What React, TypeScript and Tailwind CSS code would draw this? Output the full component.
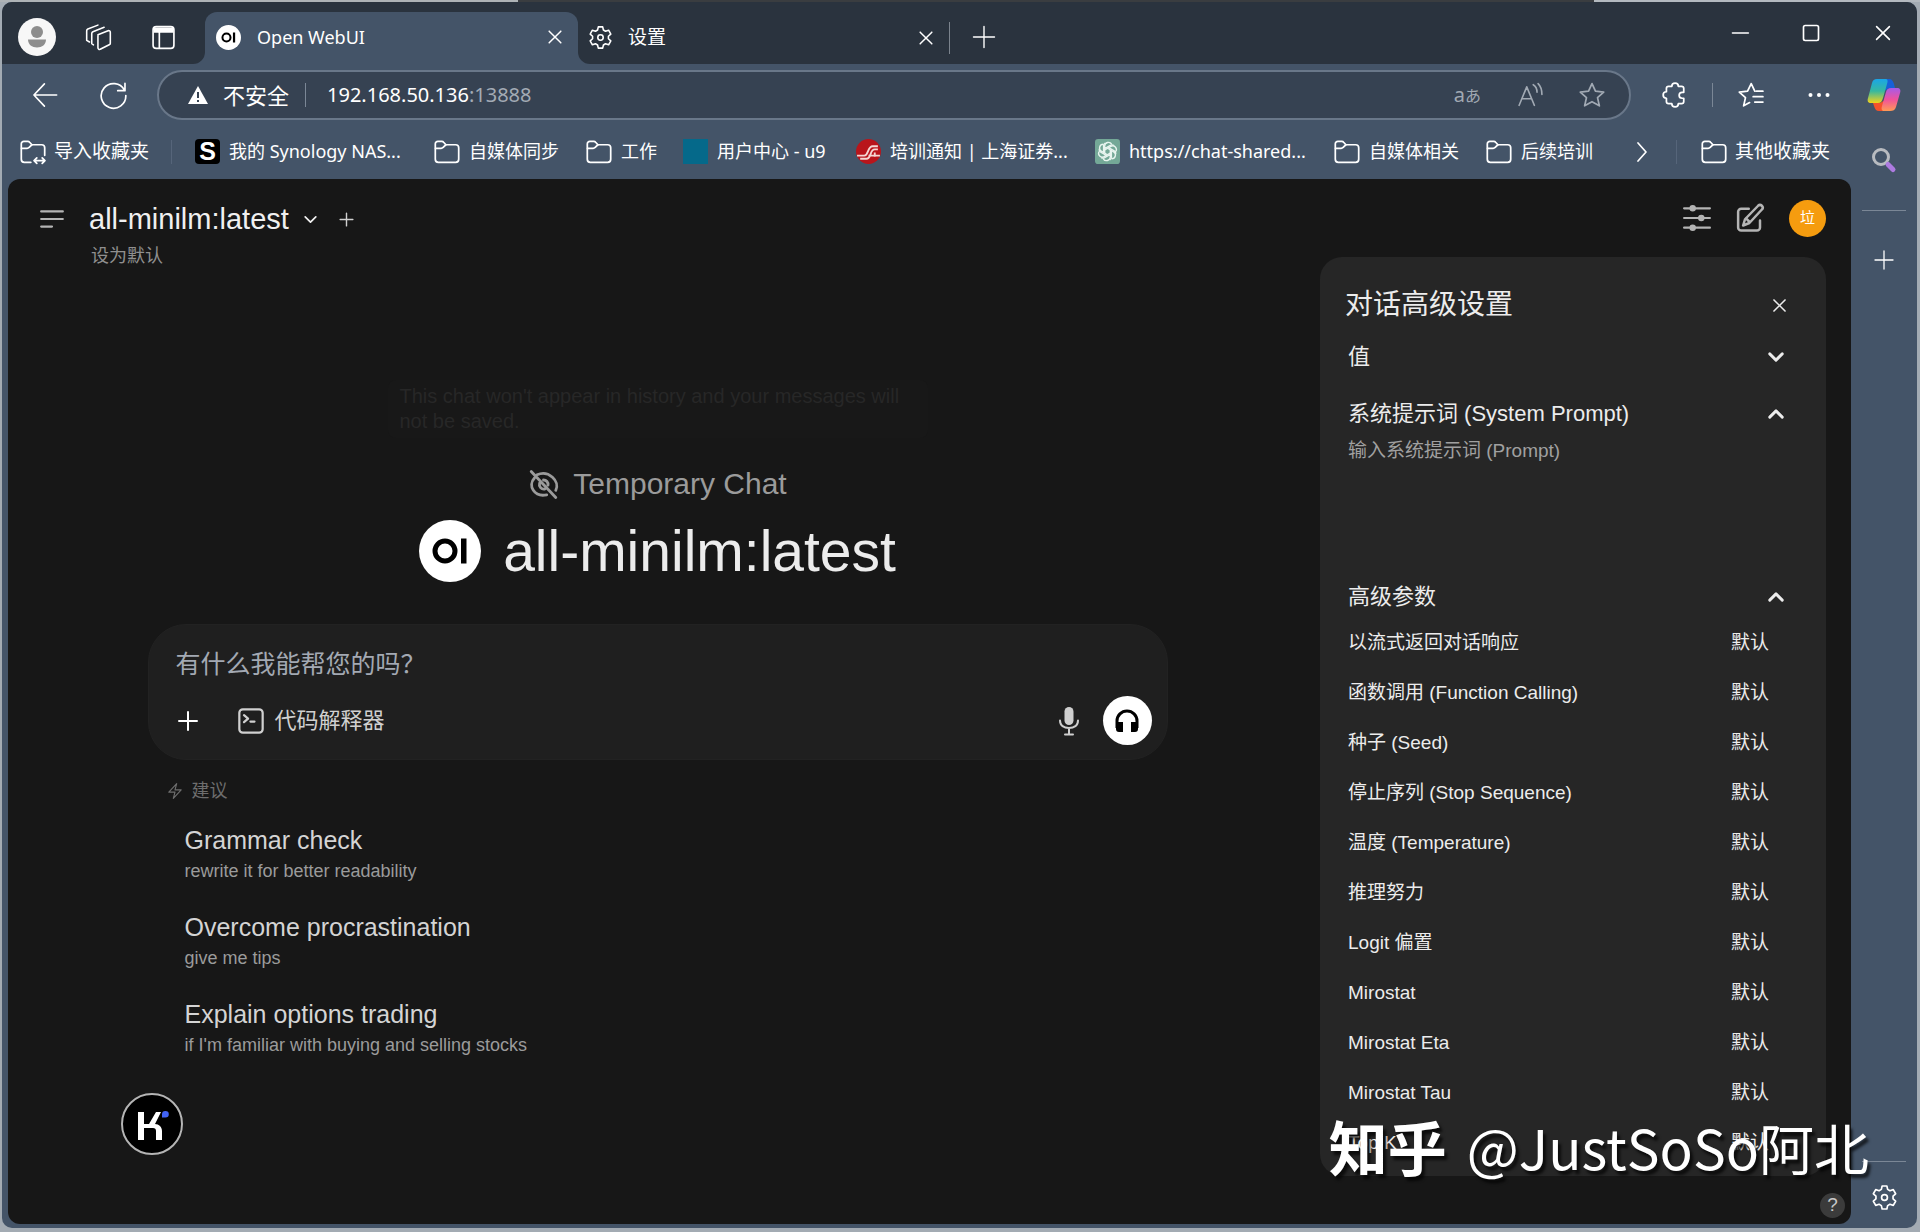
import { useState } from "react";
import type { ReactNode } from "react";
import { HiOutlineBolt } from "react-icons/hi2";

type IconProps = {
  className?: string;
  width?: number;
  children: ReactNode;
};

function Icon({ className = "size-6", width = 1.5, children }: IconProps) {
  return (
    <svg
      viewBox="0 0 24 24"
      fill="none"
      stroke="currentColor"
      strokeWidth={width}
      strokeLinecap="round"
      strokeLinejoin="round"
      className={`shrink-0 ${className}`}
      aria-hidden="true"
    >
      {children}
    </svg>
  );
}

function CloseIcon({ className = "size-6", width = 1.5 }: { className?: string; width?: number }) {
  return (
    <Icon className={className} width={width}>
      <path d="M5 5l14 14M19 5L5 19" />
    </Icon>
  );
}

function PlusIcon({ className = "size-6", width = 1.5 }: { className?: string; width?: number }) {
  return (
    <Icon className={className} width={width}>
      <path d="M12 3v18M3 12h18" />
    </Icon>
  );
}

function ChevronIcon({ className = "size-6", width = 2, up = false }: { className?: string; width?: number; up?: boolean }) {
  return (
    <Icon className={className} width={width}>
      <path d={up ? "M4.500 15.750l7.500-7.500 7.500 7.500" : "M19.500 8.250l-7.500 7.500-7.500-7.500"} />
    </Icon>
  );
}

function GearIcon({ className = "size-6" }: { className?: string }) {
  return (
    <Icon className={className} width={1.5}>
      <path d="M9.900 1.800h4.200l.7 3 2 1.200 3-1 2.100 3.700-2.300 2.100v2.400l2.300 2.100-2.100 3.700-3-1-2 1.200-.7 3H9.900l-.7-3-2-1.200-3 1-2.100-3.700 2.300-2.100v-2.400L2.100 8.700 4.200 5l3 1 2-1.200z" />
      <circle cx="12" cy="12" r="2.600" />
    </Icon>
  );
}

function FolderIcon({ sync = false }: { sync?: boolean }) {
  return (
    <Icon className="size-[26px]" width={1.6}>
      {sync ? (
        <>
          <path d="M10 21.500H4A2.800 2.800 0 0 1 1.200 18.700V4.500A2.300 2.300 0 0 1 3.500 2.200h3.700c.7 0 1.300.3 1.700.8L11 5.300h9a2.800 2.800 0 0 1 2.800 2.800v7" />
          <path d="M1.400 8.600h5.200c.7 0 1.200-.2 1.600-.7L11 5.300M13.500 20h9M15.500 17.500L13 20l2.500 2.500M20.500 17.500L23 20l-2.500 2.500" />
        </>
      ) : (
        <>
          <path d="M1.200 18.700V4.500A2.300 2.300 0 0 1 3.500 2.200h3.700c.7 0 1.300.3 1.700.8L11 5.300h9a2.800 2.800 0 0 1 2.800 2.800v10.600a2.800 2.800 0 0 1-2.800 2.800H4a2.800 2.800 0 0 1-2.800-2.800z" />
          <path d="M1.400 8.600h5.200c.7 0 1.200-.2 1.600-.7L11 5.300" />
        </>
      )}
    </Icon>
  );
}

function OiLogo({ className }: { className: string }) {
  return (
    <svg viewBox="0 0 62 62" className={`shrink-0 ${className}`} aria-hidden="true">
      <circle cx="31" cy="31" r="31" fill="#fff" />
      <circle cx="26" cy="31" r="10" fill="none" stroke="#000" strokeWidth="5" />
      <path d="M42 18.500h5.500v25H42z" fill="#000" />
    </svg>
  );
}

function SynologyIcon() {
  return (
    <span className="flex size-[25px] shrink-0 items-center justify-center rounded-sm bg-black font-['Liberation_Sans',sans-serif] text-[25px] leading-none font-bold text-white">
      S
    </span>
  );
}

function ExchangeIcon() {
  return (
    <svg viewBox="0 0 24 24" className="size-[25px] shrink-0" aria-hidden="true">
      <circle cx="12" cy="12" r="12" fill="#b9151b" />
      <path d="M1 16h7c4 0 3-9 8-9h5M4 19h6c5 0 3-9 8-9h3M12 16h11M18 13v4" fill="none" stroke="#f5d7d3" strokeWidth="1.800" />
    </svg>
  );
}

function GptIcon() {
  return (
    <svg viewBox="0 0 24 24" className="size-[25px] shrink-0" aria-hidden="true">
      <rect width="24" height="24" rx="3" fill="#74a897" />
      <g fill="none" stroke="#e8f4ef" strokeWidth="1.300">
        {[0, 60, 120, 180, 240, 300].map((angle) => (
          <path key={angle} transform={`rotate(${angle} 12 12)`} d="M9.300 13.500V6.700a3.600 3.600 0 0 1 6.700-1.700M9.300 9.200l5.400-3.100a3.600 3.600 0 0 1 3.300 0" />
        ))}
      </g>
    </svg>
  );
}

function CopilotIcon() {
  return (
    <svg viewBox="0 0 34 34" className="size-[34px]" aria-hidden="true">
      <defs>
        <linearGradient id="coolSide" x1="0" y1="0" x2="0" y2="1">
          <stop offset="0" stopColor="#1aa5e8" />
          <stop offset=".5" stopColor="#36b8a0" />
          <stop offset="1" stopColor="#f2d21b" />
        </linearGradient>
        <linearGradient id="warmSide" x1="0" y1="0" x2="0" y2="1">
          <stop offset="0" stopColor="#a65be8" />
          <stop offset=".5" stopColor="#f0529c" />
          <stop offset="1" stopColor="#ff9a55" />
        </linearGradient>
      </defs>
      <path d="M11 1h11c3 0 4 2 5 5l1 4h-6l-6 4z" fill="#1760d8" />
      <path d="M22 33H12c-3 0-4-2-5-5l-1-3h7l7-4z" fill="#f4522b" />
      <path d="M10 1h8c3 0 3 2 2 5l-4 14c-1 3-2 5-5 5H4c-3 0-4-2-3-5L5 5c1-3 2-4 5-4z" fill="url(#coolSide)" />
      <path d="M24 10h6c3 0 4 2 3 5l-4 14c-1 3-3 4-6 4h-6c-2 0-3-2-2-5l4-14c1-3 2-4 5-4z" fill="url(#warmSide)" />
    </svg>
  );
}

const bookmarks: { label: string; icon: ReactNode; width: string }[] = [
  { label: "我的 Synology NAS...", icon: <SynologyIcon />, width: "w-[215px]" },
  { label: "自媒体同步", icon: <FolderIcon />, width: "w-[128px]" },
  { label: "工作", icon: <FolderIcon />, width: "w-[73px]" },
  { label: "用户中心 - u9", icon: <span className="size-[25px] shrink-0 bg-[#05698a]" />, width: "w-[149px]" },
  { label: "培训通知 | 上海证券...", icon: <ExchangeIcon />, width: "w-[215px]" },
  { label: "https://chat-shared...", icon: <GptIcon />, width: "w-[215px]" },
  { label: "自媒体相关", icon: <FolderIcon />, width: "w-[128px]" },
  { label: "后续培训", icon: <FolderIcon />, width: "w-[111px]" },
];

const suggestions = [
  { title: "Grammar check", text: "rewrite it for better readability" },
  { title: "Overcome procrastination", text: "give me tips" },
  { title: "Explain options trading", text: "if I'm familiar with buying and selling stocks" },
];

const params = [
  "以流式返回对话响应",
  "函数调用 (Function Calling)",
  "种子 (Seed)",
  "停止序列 (Stop Sequence)",
  "温度 (Temperature)",
  "推理努力",
  "Logit 偏置",
  "Mirostat",
  "Mirostat Eta",
  "Mirostat Tau",
  "Top K",
];

function TitleBar() {
  return (
    <div className="flex h-[62px] shrink-0 items-stretch bg-[#2a333e] text-[18px]">
      <div className="flex w-[203px] shrink-0 items-center pt-2 pl-4">
        <button aria-label="个人资料">
          <svg viewBox="0 0 38 38" className="size-[38px]">
            <circle cx="19" cy="19" r="19" fill="#f7f7f7" />
            <circle cx="19" cy="14" r="6" fill="#8d8d8d" />
            <path d="M10 21.500h18c0 5-4 8-9 8s-9-3-9-8z" fill="#8d8d8d" />
          </svg>
        </button>
        <button aria-label="工作区" className="ml-[29px]">
          <Icon className="size-[27px]" width={1.4}>
            <path d="M11.500 9.500l9-3.500a1.500 1.500 0 0 1 2 1.500v9.500c0 .7-.4 1.200-1 1.500l-8 4a1.500 1.500 0 0 1-2-1.500V11c0-.7.300-1.200 0-1.500z" />
            <path d="M7.500 18.500L6 17.500V8.500c0-.8.400-1.300 1-1.600l10-4M4 16l-2.500-1.500V6c0-.8.400-1.300 1-1.600l9-3.400" />
          </Icon>
        </button>
        <button aria-label="标签页操作菜单" className="ml-[39px]">
          <Icon className="size-[25px]" width={1.6}>
            <rect x="2" y="1.500" width="20" height="21" rx="3" />
            <path d="M2.500 5h19" strokeWidth="5" strokeLinecap="butt" />
            <path d="M8 7v15" />
          </Icon>
        </button>
      </div>
      <div className="relative mt-[10px] flex w-[373px] shrink-0 items-center rounded-t-xl bg-[#445468] pb-[2px] pl-[11px]">
        <svg viewBox="0 0 12 12" className="absolute bottom-0 -left-3 size-3 fill-[#445468]" aria-hidden="true">
          <path d="M12 0v12H0A12 12 0 0 0 12 0z" />
        </svg>
        <svg viewBox="0 0 12 12" className="absolute -right-3 bottom-0 size-3 fill-[#445468]" aria-hidden="true">
          <path d="M0 0v12h12A12 12 0 0 1 0 0z" />
        </svg>
        <OiLogo className="size-[25px]" />
        <span className="ml-4 flex-1 text-white">Open WebUI</span>
        <button aria-label="关闭标签页" className="mr-[13px]">
          <CloseIcon className="size-5" width={1.8} />
        </button>
      </div>
      <div className="flex w-[372px] shrink-0 items-center pt-[9px] pl-[10px]">
        <GearIcon className="size-[25px]" />
        <span className="ml-[15px] flex-1 text-[19px]">设置</span>
        <button aria-label="关闭标签页" className="mr-[13px]">
          <CloseIcon className="size-5" width={1.8} />
        </button>
        <span className="h-8 w-px bg-[#7b838d]" />
      </div>
      <button aria-label="新建标签页" className="mt-2 ml-[20px]">
        <PlusIcon className="size-7" width={1.2} />
      </button>
      <div className="flex flex-1 items-center justify-end gap-[51px] pr-[23px]">
        <button aria-label="最小化">
          <Icon className="size-5" width={2}>
            <path d="M3 12h19" />
          </Icon>
        </button>
        <button aria-label="最大化">
          <Icon className="size-5" width={2}>
            <rect x="3" y="3" width="18" height="18" rx="2" />
          </Icon>
        </button>
        <button aria-label="关闭">
          <CloseIcon className="size-[22px]" width={1.7} />
        </button>
      </div>
    </div>
  );
}

function Toolbar() {
  return (
    <div className="flex h-[62px] shrink-0 items-center pl-[29px]">
      <button aria-label="返回">
        <Icon className="size-[28px]" width={1.4}>
          <path d="M22 12H2.500M11.500 2.500L2.500 12l9 9.500" />
        </Icon>
      </button>
      <button aria-label="刷新" className="ml-[40px]">
        <Icon className="size-[29px]" width={1.4}>
          <path d="M21.500 2v6h-6M21 7.500A10.200 10.200 0 1 0 22.200 12" />
        </Icon>
      </button>
      <div className="ml-[29px] flex h-[50px] flex-1 items-center rounded-full border-2 border-[#697789] bg-[#364252] pr-[24px] pl-[29px]">
        <svg viewBox="0 0 20 18" className="h-[18px] w-5" aria-hidden="true">
          <path d="M10 0l10 18H0z" fill="#fff" />
          <path d="M10 6v6M10 14v2" stroke="#364252" strokeWidth="2" />
        </svg>
        <span className="ml-[15px] text-[22px]">不安全</span>
        <span className="mx-[16px] h-6 w-px bg-[#7b8796]" />
        <div className="relative ml-[5px] flex-1 text-[20px]">
          <div className="pointer-events-none" aria-hidden="true">
            192.168.50.136<span className="text-[#a3abb5]">:13888</span>
          </div>
          <input aria-label="地址" defaultValue="192.168.50.136:13888" className="absolute inset-0 w-full bg-transparent text-transparent outline-none" />
        </div>
        <div className="flex items-center gap-[36px] text-[#a1a9b3]">
          <button aria-label="翻译" className="text-[20px]">
            a<span className="text-[16px]">あ</span>
          </button>
          <button aria-label="大声朗读">
            <Icon className="size-[26px]" width={1.5}>
              <path d="M2 21.500L9 4.500l7 17M4.500 15.500h9M15 2.500c2.500 1.500 3.500 4 3.500 7M19.500 1.500c2.500 2.500 3.500 6 3.500 10" />
            </Icon>
          </button>
          <button aria-label="收藏">
            <Icon className="size-[26px]" width={1.6}>
              <path d="M12 1.500l3.200 7 7.600.8-5.700 5.100 1.700 7.600L12 18.200 5.200 22l1.700-7.600L1.200 9.300l7.600-.8z" />
            </Icon>
          </button>
        </div>
      </div>
      <div className="flex items-center pr-[16px] pl-[30px]">
        <button aria-label="扩展">
          <Icon className="size-[26px]" width={1.6}>
            <path d="M5 6a2 2 0 0 1 2-2h3a3 3 0 0 1 6 0h3a2 2 0 0 1 2 2v3.500h-1.500a2.700 2.700 0 0 0 0 5.500H21v3a2 2 0 0 1-2 2h-3a3 3 0 0 1-6 0H7a2 2 0 0 1-2-2v-3a3 3 0 0 1 0-6z" />
          </Icon>
        </button>
        <span className="ml-[25px] h-6 w-px bg-[#7b8796]" />
        <button aria-label="收藏夹" className="ml-[25px]">
          <Icon className="size-[26px]" width={1.6}>
            <path d="M15.500 8.500L12.200 1.500l-3.400 7-7.600.8 5.700 5.100L5.200 22l5.500-3M17 8.500h6M14 13.500h9M15.500 18.500H23" />
          </Icon>
        </button>
        <button aria-label="设置及其他" className="ml-[43px]">
          <svg viewBox="0 0 24 24" className="size-6 fill-current">
            <circle cx="3.500" cy="12" r="2" />
            <circle cx="12" cy="12" r="2" />
            <circle cx="20.500" cy="12" r="2" />
          </svg>
        </button>
        <button aria-label="Copilot" className="ml-[36px]">
          <CopilotIcon />
        </button>
      </div>
    </div>
  );
}

function BookmarksBar() {
  return (
    <nav className="flex h-[53px] shrink-0 items-center pr-[21px] pb-[2px] pl-[18px] text-[18px] whitespace-nowrap">
      <a href="#import" className="flex w-[151px] shrink-0 items-center gap-[8px] text-[19px]">
        <FolderIcon sync />
        导入收藏夹
      </a>
      <span className="mr-[23px] h-6 w-px bg-[#56657a]" />
      <div className="flex gap-[24px]">
        {bookmarks.map((item) => (
          <a key={item.label} href="#bookmark" className={`flex shrink-0 items-center gap-[9px] ${item.width}`}>
            {item.icon}
            <span>{item.label}</span>
          </a>
        ))}
      </div>
      <div className="flex flex-1 items-center justify-end">
        <button aria-label="更多收藏夹">
          <Icon className="size-6" width={1.7}>
            <path d="M8 3l8 9-8 9" />
          </Icon>
        </button>
        <span className="mr-[24px] ml-[22px] h-6 w-px bg-[#56657a]" />
        <a href="#others" className="flex items-center gap-[8px] text-[19px]">
          <FolderIcon />
          其他收藏夹
        </a>
      </div>
    </nav>
  );
}

function EdgeSidebar() {
  return (
    <aside className="flex w-[66px] shrink-0 flex-col items-center pt-[20px] pb-[17px]">
      <button aria-label="搜索">
        <svg viewBox="0 0 28 28" className="size-7" fill="none">
          <circle cx="11" cy="11" r="7.500" stroke="#b8bbc0" strokeWidth="3" />
          <path d="M18 18.500l5 5" stroke="#ad7be0" strokeWidth="5" strokeLinecap="round" />
        </svg>
      </button>
      <span className="mt-[36px] h-px w-11 bg-[#7b8796]" />
      <button aria-label="自定义边栏" className="mt-[37px]">
        <PlusIcon className="size-6" width={1.3} />
      </button>
      <span className="mt-auto mb-[22px] h-px w-11 bg-[#7b8796]" />
      <button aria-label="设置">
        <GearIcon className="size-[27px]" />
      </button>
    </aside>
  );
}

function Composer() {
  const [message, setMessage] = useState("");

  return (
    <form className="mt-[42px] rounded-[38px] border border-[#222222] bg-[#1f1f1f] px-[15px] pt-[19px] pb-[14px]" onSubmit={(e) => e.preventDefault()}>
      <input
        aria-label="消息"
        value={message}
        onChange={(e) => setMessage(e.target.value)}
        placeholder="有什么我能帮您的吗？"
        className="h-10 w-full bg-transparent px-[12px] text-[25px] text-gray-100 outline-none placeholder:text-[#a3a9b3]"
      />
      <div className="mt-3 flex h-[49px] items-center">
        <button type="button" aria-label="更多" className="ml-[12px] text-white">
          <PlusIcon className="size-6" width={2} />
        </button>
        <button type="button" className="ml-[37px] flex items-center gap-[10px] text-[22px] text-[#d0d0d0]">
          <Icon className="size-[28px]" width={1.9}>
            <rect x="2" y="2" width="20" height="20" rx="3" />
            <path d="M6 7l3.500 3L6 13M11.500 12.500h3.500" />
          </Icon>
          代码解释器
        </button>
        <button type="button" aria-label="语音输入" className="ml-auto text-[#cfcfcf]">
          <svg viewBox="0 0 24 30" className="h-[30px] w-6">
            <rect x="7.500" y="1" width="9" height="18" rx="4.500" fill="currentColor" />
            <path d="M3 14.500c0 5 4 7.500 9 7.500s9-2.500 9-7.500M12 22v6M8 28.500h8" fill="none" stroke="currentColor" strokeWidth="2" strokeLinecap="round" />
          </svg>
        </button>
        <button type="button" aria-label="语音通话" className="ml-[22px] flex size-[49px] items-center justify-center rounded-full bg-white text-black">
          <svg viewBox="0 0 24 24" className="size-6">
            <path d="M2 19v-7a10 10 0 0 1 20 0v7" fill="none" stroke="currentColor" strokeWidth="3" />
            <path d="M1 13h7v10H4a3 3 0 0 1-3-3zM23 13h-7v10h4a3 3 0 0 0 3-3z" fill="currentColor" />
          </svg>
        </button>
      </div>
    </form>
  );
}

function ChatColumn() {
  return (
    <main className="flex min-w-0 flex-1 flex-col">
      <header className="pt-[22px] pl-[31px]">
        <div className="flex items-center">
          <button aria-label="侧边栏" className="text-[#b4b4b4]">
            <Icon className="size-[26px]" width={2}>
              <path d="M2 5h20M2 12h20M2 19h10" />
            </Icon>
          </button>
          <button className="ml-[24px] flex items-center gap-[13px] text-[29px] leading-[36px] text-[#f0f0f0]">
            all-minilm:latest
            <ChevronIcon className="size-[17px]" width={2.4} />
          </button>
          <button aria-label="添加模型" className="ml-[19px] text-[#d0d0d0]">
            <PlusIcon className="size-[17px]" width={2} />
          </button>
        </div>
        <button className="mt-[6px] ml-[52px] block text-[18px] leading-[26px] text-[#8f8f8f]">设为默认</button>
      </header>

      <div className="mx-auto mt-[111px] w-full max-w-[1020px]">
        <p className="mx-auto w-[540px] rounded-lg bg-[#181818] px-3 py-1 text-[20px] leading-[25px] text-[#272727]">
          This chat won't appear in history and your messages will not be saved.
        </p>
        <div className="mt-[26px] flex items-center justify-center gap-[14px] text-[30px] leading-[40px] text-[#9b9b9b]">
          <Icon className="size-[31px]" width={2.2}>
            <path d="M2.500 2l19 20M7 4.500c9-4 18 5 14.500 12M5 7C-.500 13 5 22 14.500 20M12 8.500a3.500 3.500 0 0 1 3.500 4M9 11a3.500 3.500 0 0 0 4 4.500" />
          </Icon>
          Temporary Chat
        </div>
        <div className="mt-4 flex items-center justify-center gap-[22px]">
          <OiLogo className="size-[62px]" />
          <h1 className="text-[57px] leading-[62px] text-[#ececec]">all-minilm:latest</h1>
        </div>

        <Composer />

        <div className="mt-[18px] flex items-center gap-[8px] pl-[18px] text-[18px] leading-[26px] text-[#6e6e6e]">
          <HiOutlineBolt className="size-[18px]" />
          建议
        </div>
        <div className="mt-[20px] flex flex-col gap-[28px] pl-[37px]">
          {suggestions.map((item) => (
            <button key={item.title} className="block text-left">
              <span className="block text-[25px] leading-[32px] text-[#d4d4d4]">{item.title}</span>
              <span className="mt-[3px] block text-[18px] leading-[24px] text-[#9b9b9b]">{item.text}</span>
            </button>
          ))}
        </div>
      </div>
    </main>
  );
}

function SettingsPanel() {
  return (
    <section className="w-[506px] overflow-hidden rounded-[22px] bg-[#262626] pr-[37px] pb-[8px] pl-[28px] text-[#ececec]">
      <div className="flex items-center justify-between pt-[28px]">
        <h2 className="-ml-[3px] text-[28px] leading-[40px]">对话高级设置</h2>
        <button aria-label="关闭">
          <CloseIcon className="size-[19px]" width={2} />
        </button>
      </div>
      <button className="mt-[16px] flex w-full items-center justify-between text-[22px] leading-[32px]">
        值
        <ChevronIcon className="mr-[3px] size-5" width={3.4} />
      </button>
      <button className="mt-[25px] flex w-full items-center justify-between text-[22px] leading-[32px]">
        系统提示词 (System Prompt)
        <ChevronIcon className="mr-[3px] size-5" width={3.4} up />
      </button>
      <textarea
        aria-label="系统提示词"
        placeholder="输入系统提示词 (Prompt)"
        className="mt-[8px] block h-[112px] w-full resize-none bg-transparent text-[19px] leading-[26px] outline-none placeholder:text-[#a0a0a0]"
      />
      <button className="mt-[31px] flex w-full items-center justify-between text-[22px] leading-[32px]">
        高级参数
        <ChevronIcon className="mr-[3px] size-5" width={3.4} up />
      </button>
      <div className="mt-[5px] text-[19px]">
        {params.map((name) => (
          <div key={name} className="flex h-[50px] items-center justify-between pr-[20px]">
            <span>{name}</span>
            <button>默认</button>
          </div>
        ))}
      </div>
    </section>
  );
}

function SettingsColumn() {
  return (
    <div className="flex w-[544px] shrink-0 flex-col items-end pr-[25px]">
      <div className="flex h-[78px] shrink-0 items-center gap-[24px] text-[#b4b4b4]">
        <button aria-label="对话高级设置">
          <svg viewBox="0 0 26 26" className="size-[28px]" fill="none" stroke="currentColor" strokeWidth="2" strokeLinecap="round">
            <path d="M1 4h24M1 13h24M1 22h24" />
            <g fill="currentColor" stroke="none">
              <circle cx="9" cy="4" r="3" />
              <circle cx="17" cy="13" r="3" />
              <circle cx="9" cy="22" r="3" />
            </g>
          </svg>
        </button>
        <button aria-label="新对话">
          <Icon className="size-[30px]" width={2}>
            <path d="M11 4.500H5A2.500 2.500 0 0 0 2.500 7v12.500A2.500 2.500 0 0 0 5 22h12.500a2.500 2.500 0 0 0 2.500-2.500V14" />
            <path d="M18.500 2.200a2.100 2.100 0 0 1 3 3L11.500 16l-5 2 1.500-5z" />
            <path d="M9 12.500l2.500 2.500" />
          </Icon>
        </button>
        <button className="flex size-[37px] items-center justify-center rounded-full bg-[#f59c0f] text-[15px] text-white">垃</button>
      </div>
      <SettingsPanel />
    </div>
  );
}

export default function App() {
  return (
    <div lang="zh-CN" className="relative flex min-h-screen flex-col bg-[#a3abb3] font-['Noto_Sans','Noto_Sans_CJK_SC',sans-serif] text-white">
      <div className="flex h-[2px] shrink-0">
        <span className="w-[27%] bg-[#aeb3b6]" />
        <span className="w-[56%] bg-[#3a3d40]" />
        <span className="flex-1 bg-[#b3b9bf]" />
      </div>
      <div className="mr-[3px] mb-[4px] ml-[2px] flex flex-1 flex-col overflow-hidden rounded-[10px] bg-[#445468]">
        <TitleBar />
        <Toolbar />
        <div className="flex flex-1">
          <div className="flex min-w-0 flex-1 flex-col pb-[4px]">
            <BookmarksBar />
            <div className="relative ml-[6px] flex flex-1 overflow-hidden rounded-xl bg-[#171717] font-['Liberation_Sans','Noto_Sans_CJK_SC',sans-serif]">
              <ChatColumn />
              <SettingsColumn />
              <button aria-label="Kimi" className="absolute bottom-[69px] left-[113px]">
                <svg viewBox="0 0 62 62" className="size-[62px]">
                  <circle cx="31" cy="31" r="30" fill="#000" stroke="#b5b5b5" strokeWidth="2" />
                  <path d="M17 19h6v12h5l7-12h5l-6 12c4 0 7 3 7 7v9h-6V38c0-2-1-3-3-3h-9v12h-6z" fill="#fff" />
                  <path d="M44.500 18a3.300 3.300 0 1 1 0 6.600H41v-3.300a3.400 3.400 0 0 1 3.500-3.300z" fill="#4263f5" />
                </svg>
              </button>
              <button aria-label="帮助" className="absolute right-[6px] bottom-[6px] flex size-[25px] items-center justify-center rounded-full bg-[#3b3b3b] text-[19px] text-[#c8c8c8]">
                ?
              </button>
            </div>
          </div>
          <EdgeSidebar />
        </div>
      </div>
      <div className="pointer-events-none absolute right-[51px] bottom-[46px] flex items-center gap-[20px] font-['Noto_Sans_CJK_SC',sans-serif] text-[55px] leading-[80px] text-white [text-shadow:3px_4px_3px_rgb(0_0_0/0.7)]">
        <span className="text-[59px] font-bold">知乎</span>
        <span>@JustSoSo阿北</span>
      </div>
    </div>
  );
}
